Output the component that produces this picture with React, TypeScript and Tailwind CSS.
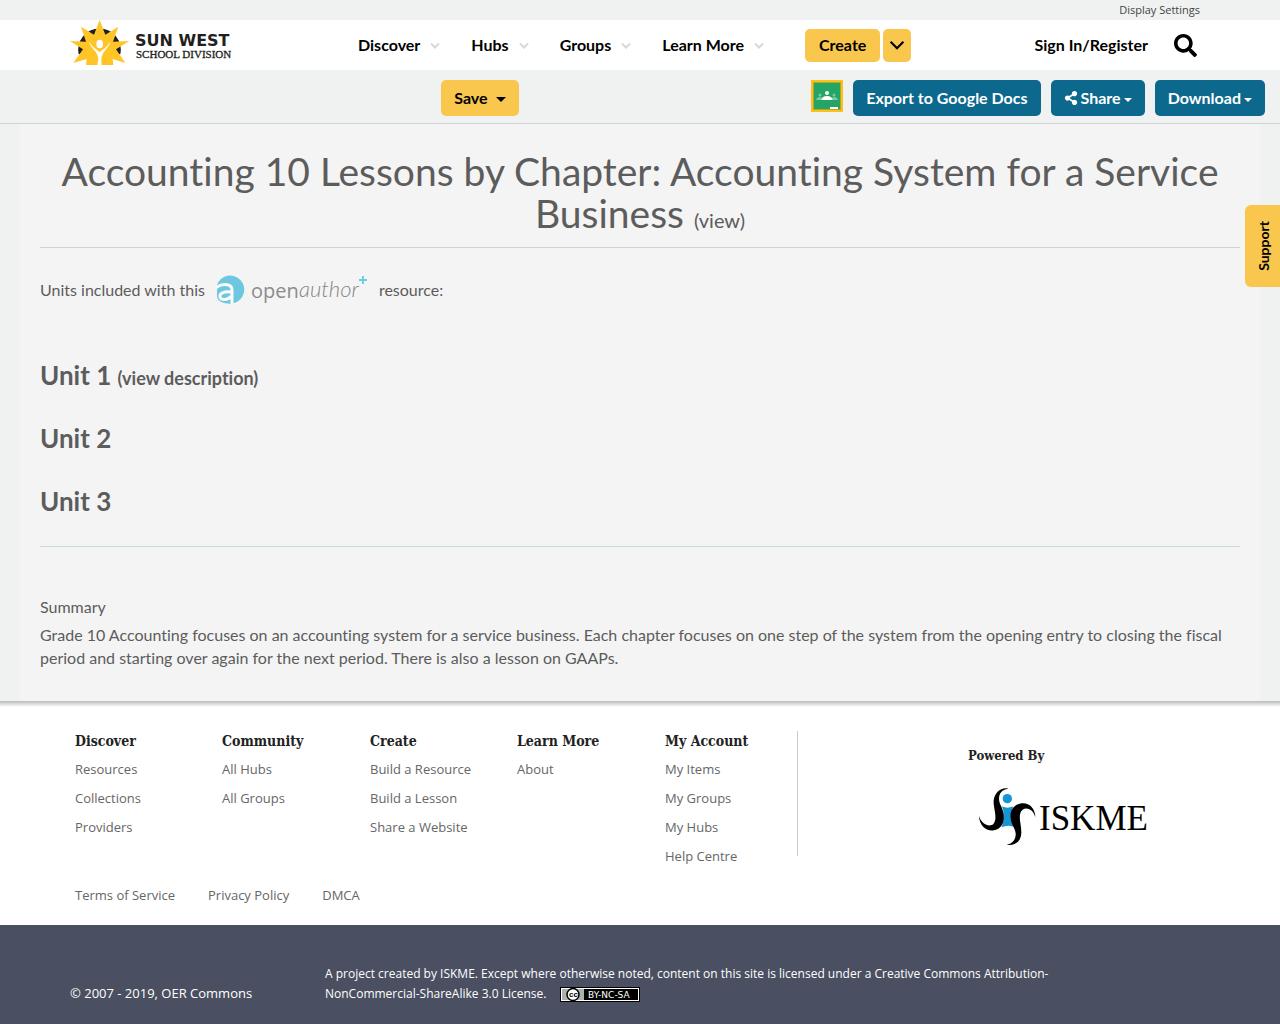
import { FaSearch, FaShareAlt } from "react-icons/fa";

interface FooterColumn {
  title: string;
  links: string[];
}

const NAV_ITEMS = ["Discover", "Hubs", "Groups", "Learn More"];

const FOOTER_COLUMNS: FooterColumn[] = [
  { title: "Discover", links: ["Resources", "Collections", "Providers"] },
  { title: "Community", links: ["All Hubs", "All Groups"] },
  { title: "Create", links: ["Build a Resource", "Build a Lesson", "Share a Website"] },
  { title: "Learn More", links: ["About"] },
  { title: "My Account", links: ["My Items", "My Groups", "My Hubs", "Help Centre"] },
];

const LEGAL_LINKS = ["Terms of Service", "Privacy Policy", "DMCA"];

function SunWestLogo() {
  return (
    <svg width="166" height="45" viewBox="0 0 166 45" role="img" aria-label="Sun West School Division">
      <svg width="60" height="45" viewBox="30 60 180 135">
        <path d="M56 163 A64 64 0 1 1 181 163 L160 160 L76 160 Z" fill="#231f20" />
        <path
          d="M119 60 L136 104 L175 80 L159 125 L208 123 L168 148 L196 189 L158 177 L160 195 L78 195 L80 177 L40 189 L69 148 L30 123 L78 125 L63 80 L102 104 Z"
          fill="#ffc425"
        />
        <ellipse cx="119" cy="132" rx="10" ry="13" fill="#fff" />
        <path
          d="M88 127 C96 148 110 153 114 169 C117 180 113 188 113 195 L124 195 C125 187 122 179 125 169 C130 152 143 147 150 127 C141 142 126 151 119 157 C112 151 97 142 88 127 Z"
          fill="#fff"
          stroke="#fff"
        />
      </svg>
      <text x="65" y="26" fontFamily="DejaVu Sans, sans-serif" fontWeight="700" fontSize="16" fill="#231f20">
        SUN WEST
      </text>
      <text
        x="66"
        y="38"
        fontFamily="Liberation Serif, serif"
        fontWeight="400"
        fontSize="11"
        fill="#231f20"
        stroke="#231f20"
        strokeWidth="0.3"
      >
        SCHOOL DIVISION
      </text>
    </svg>
  );
}

function OpenAuthorLogo() {
  return (
    <svg width="152" height="32" viewBox="0 0 152 32" role="img" aria-label="openauthor">
      <path d="M1 11 A14 14 0 1 1 18 29 L15 30 L8 29 Q0 27 1 20 Z" fill="#6dc8df" />
      <path
        d="M0 14 C5 9 16 9 16 16 L16 30 M15 18 C9 17 3 19 4 23 C5 27 13 26 15 22"
        fill="none"
        stroke="#fafafa"
        strokeWidth="3"
      />
      <text x="35" y="24" fontFamily="Open Sans, sans-serif" fontSize="20" fill="#8c8c8c">
        open
      </text>
      <text x="83" y="23" fontFamily="Lato, sans-serif" fontWeight="300" fontStyle="italic" fontSize="22" fill="#858585">
        author
      </text>
      <path d="M147 2 V10 M143 6 H151" stroke="#6dcde6" strokeWidth="2" />
    </svg>
  );
}

function IskmeLogo() {
  return (
    <svg width="171" height="59" viewBox="0 0 171 59" role="img" aria-label="ISKME">
      <svg width="58" height="59" viewBox="54 153 174 177">
        <path d="M126 211 Q142 219 159 211 Q151 241 160 272 Q142 265 125 274 Q137 240 126 211 Z" fill="#1695d3" />
        <circle cx="142" cy="188" r="14" fill="#1695d3" />
        <path d="M143 157 C118 154 99 175 101 203 C104 228 112 250 100 264 C88 275 64 264 57 240 C58 270 80 287 102 283 C126 279 134 258 131 235 C128 212 117 205 117 188 C117 172 127 160 143 159 Z" />
        <path d="M226 244 C226 215 205 199 185 202 C160 205 149 225 152 248 C155 270 169 280 167 298 C165 315 155 324 140 326 C165 331 184 315 184 290 C184 265 176 250 181 232 C187 211 217 212 226 244 Z" />
      </svg>
      <text x="61" y="43" fontFamily="Liberation Serif, serif" fontSize="35" fill="#000">
        ISKME
      </text>
    </svg>
  );
}

function ClassroomIcon() {
  return (
    <svg width="32" height="32" viewBox="0 0 32 32" aria-hidden="true">
      <rect width="32" height="32" fill="#fbc116" />
      <rect x="2" y="2" width="28" height="28" fill="#b5a52a" />
      <rect x="3" y="3" width="26" height="26" fill="#23a566" />
      <g fill="#7bc9a2">
        <circle cx="9" cy="15" r="1.5" />
        <circle cx="23" cy="15" r="1.5" />
        <path d="M5 20 Q6 17 9 17 L12 18 V20 Z M27 20 Q26 17 23 17 L20 18 V20 Z" />
      </g>
      <circle cx="16" cy="13" r="2" fill="#fff" />
      <path d="M10.500 20 Q11 16 16 16 Q21 16 21.500 20 Z" fill="#fff" />
      <rect x="19" y="27" width="8" height="2" fill="#fff" />
    </svg>
  );
}

function CcBadge() {
  return (
    <svg width="80" height="15" viewBox="0 0 80 15" role="img" aria-label="Creative Commons BY-NC-SA">
      <rect width="80" height="15" fill="#000" />
      <rect x="1.500" y="1.500" width="77" height="12" fill="none" stroke="#fff" />
      <rect x="2" y="2" width="22" height="11" fill="#aab2ab" />
      <circle cx="13" cy="7.500" r="6" fill="#fff" stroke="#000" strokeWidth="1.500" />
      <text x="9" y="10" fontFamily="Liberation Sans, sans-serif" fontWeight="700" fontSize="8" fill="#000">
        cc
      </text>
      <text x="28" y="11" fontFamily="DejaVu Sans, sans-serif" fontSize="9" fill="#fff">
        BY-NC-SA
      </text>
    </svg>
  );
}

function Chevron({ className }: { className: string }) {
  return (
    <svg viewBox="0 0 10 6" className={className} fill="none" stroke="currentColor" aria-hidden="true">
      <path d="M1 0.500 L5 4.500 L9 0.500" />
    </svg>
  );
}

function Caret({ className }: { className: string }) {
  return (
    <svg viewBox="0 0 10 5" className={className} fill="currentColor" aria-hidden="true">
      <path d="M0 0 H10 L5 5 Z" />
    </svg>
  );
}

function Header() {
  return (
    <header>
      <div className="h-5 bg-[#f0f2f2]">
        <div className="mx-auto flex max-w-[1140px] justify-end px-[10px]">
          <a href="#" className="font-['Open_Sans',sans-serif] text-[11px] leading-5 text-[#444]">
            Display Settings
          </a>
        </div>
      </div>
      <div className="mx-auto flex h-[50px] max-w-[1140px] items-center pr-[13px] font-bold text-black">
        <a href="#" className="-mt-[5px]">
          <SunWestLogo />
        </a>
        <nav className="ml-[122px] flex gap-[31px]">
          {NAV_ITEMS.map((item) => (
            <button key={item} className="flex items-center gap-[10px] whitespace-nowrap">
              {item}
              <Chevron className="mt-[2px] w-[10px] stroke-2 text-[#d8d8d8]" />
            </button>
          ))}
        </nav>
        <div className="ml-[41px] flex gap-[3px]">
          <button className="h-[33px] rounded-[5px] bg-[#f9c74e] px-[14px]">Create</button>
          <button aria-label="More create options" className="flex h-[33px] w-7 items-center justify-center rounded-[5px] bg-[#f9c74e]">
            <Chevron className="mt-[2px] w-4 stroke-[1.3]" />
          </button>
        </div>
        <a href="#" className="ml-auto whitespace-nowrap">
          Sign In/Register
        </a>
        <button aria-label="Search" className="ml-[26px]">
          <FaSearch size={23} />
        </button>
      </div>
    </header>
  );
}

function Toolbar() {
  const blue = "flex h-9 items-center rounded-[5px] bg-[#0c698d] px-[13px] font-bold whitespace-nowrap text-white";
  return (
    <div className="flex h-[54px] items-start border-b border-[#cfd4d4] bg-[#f0f2f2] px-[15px] pt-[10px]">
      <button className="ml-[34.1%] flex h-9 items-center gap-2 rounded-[5px] bg-[#f9c74e] px-[13px] font-bold text-black">
        Save
        <Caret className="mt-[2px] w-[10px]" />
      </button>
      <div className="ml-auto flex gap-[10px]">
        <button aria-label="Share to Google Classroom" className="h-8">
          <ClassroomIcon />
        </button>
        <button className={blue}>Export to Google Docs</button>
        <button className={blue}>
          <FaShareAlt size={14} className="mr-[3px]" />
          Share
          <Caret className="mt-1 ml-[3px] w-2" />
        </button>
        <button className={blue}>
          Download
          <Caret className="mt-1 ml-[3px] w-2" />
        </button>
      </div>
    </div>
  );
}

function Footer() {
  return (
    <footer className="font-['Open_Sans',sans-serif] text-[13px] text-[#666]">
      <div className="bg-white">
        <div className="h-[6px] bg-linear-to-b from-[#bbb] to-white" />
        <div className="mx-auto h-[218px] max-w-[1140px] px-[5px] pt-6">
          <div className="flex h-[154px]">
            <div className="grid w-[722px] grid-cols-[147px_148px_147px_148px_132px]">
              {FOOTER_COLUMNS.map((col) => (
                <section key={col.title}>
                  <h3 className="mb-2 font-['DejaVu_Serif_Condensed','DejaVu_Serif',serif] text-sm leading-5 font-bold whitespace-nowrap text-[#222]">
                    {col.title}
                  </h3>
                  <ul className="flex flex-col gap-[9px]">
                    {col.links.map((link) => (
                      <li key={link} className="leading-5">
                        <a href="#">{link}</a>
                      </li>
                    ))}
                  </ul>
                </section>
              ))}
            </div>
            <div className="h-[125px] border-l border-[#ccc]" />
            <div className="ml-[170px] pt-[15px]">
              <h3 className="mb-[21px] font-['DejaVu_Serif_Condensed','DejaVu_Serif',serif] text-[13px] leading-5 font-bold text-[#222]">
                Powered By
              </h3>
              <a href="#" className="ml-[10px] block">
                <IskmeLogo />
              </a>
            </div>
          </div>
          <div className="flex gap-[33px] leading-5">
            {LEGAL_LINKS.map((link) => (
              <a key={link} href="#">
                {link}
              </a>
            ))}
          </div>
        </div>
      </div>
      <div className="bg-[#4a4f61] text-white">
        <div className="mx-auto flex min-h-[99px] max-w-[1140px] pt-[39px]">
          <p className="w-[255px] shrink-0 pt-[19px] leading-5">© 2007 - 2019, OER Commons</p>
          <p className="max-w-[750px] text-xs leading-5">
            A project created by ISKME. Except where otherwise noted, content on this site is licensed under a Creative
            Commons Attribution-NonCommercial-ShareAlike 3.0 License.
            <a href="#" className="ml-[14px] inline-block align-middle">
              <CcBadge />
            </a>
          </p>
        </div>
      </div>
    </footer>
  );
}

export default function App() {
  return (
    <div className="min-h-screen bg-white font-['Lato',sans-serif] text-base text-[#5c5c5c]">
      <Header />
      <Toolbar />
      <main className="bg-[#f0f2f2] px-5">
        <div className="bg-[#f4f4f4] px-5 pt-[26px] pb-8">
          <h1 className="border-b border-[#cfd4d4] pb-[13px] text-center text-[39px] leading-[42px] [font-variant-ligatures:none]">
            Accounting 10 Lessons by Chapter: Accounting System for a Service Business{" "}
            <a href="#" className="text-xl leading-none">
              (view)
            </a>
          </h1>
          <div className="mt-[26px] flex h-8 items-center">
            Units included with this
            <span className="mr-[11px] ml-[11px]">
              <OpenAuthorLogo />
            </span>
            resource:
          </div>
          <div className="mt-[53px] flex flex-col gap-[31px] border-b border-[#c3dcdc] pb-[29px] text-[26px] leading-8 font-bold [font-variant-ligatures:none]">
            <h2>
              <a href="#">Unit 1</a>{" "}
              <a href="#" className="text-lg leading-none">
                (view description)
              </a>
            </h2>
            <h2>
              <a href="#">Unit 2</a>
            </h2>
            <h2>
              <a href="#">Unit 3</a>
            </h2>
          </div>
          <h4 className="mt-12 mb-[5px] leading-[23px]">Summary</h4>
          <p className="leading-[23px] [font-variant-ligatures:none]">
            Grade 10 Accounting focuses on an accounting system for a service business. Each chapter focuses on one step
            of the system from the opening entry to closing the fiscal period and starting over again for the next
            period. There is also a lesson on GAAPs.
          </p>
        </div>
      </main>
      <Footer />
      <button className="fixed top-[205px] right-0 flex h-[82px] w-[35px] items-center justify-center rounded-l-[6px] bg-[#f9c74e] pl-[2px] text-sm font-bold text-black">
        <span className="rotate-180 [writing-mode:vertical-rl]">Support</span>
      </button>
    </div>
  );
}
